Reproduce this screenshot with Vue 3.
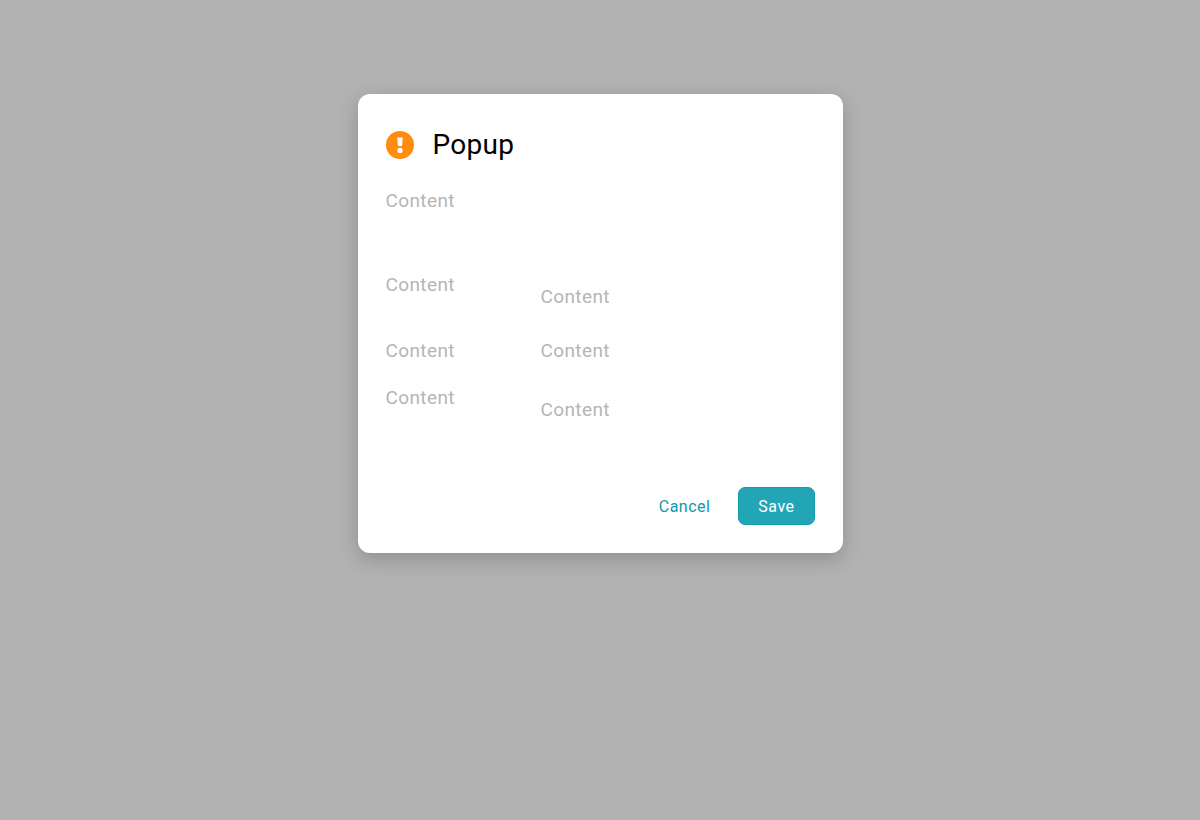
<script setup>
const rows = [
  { label: 'Content', value: 'Content', kind: 'offset' },
  { label: 'Content', value: 'Content', kind: 'level' },
  { label: 'Content', value: 'Content', kind: 'offset' },
]
</script>

<template>
  <main class="overlay">
    <section class="popup" role="dialog" aria-labelledby="popup-title">
      <header class="head">
        <svg class="icon" viewBox="0 0 28 28" aria-hidden="true">
          <circle cx="14" cy="14" r="14" fill="#ff8c0f" />
          <path d="M11.3 6.500h5.400l-.6 8.600h-4.200z" fill="#fff" />
          <circle cx="14" cy="19.400" r="2.600" fill="#fff" />
        </svg>
        <h1 id="popup-title" class="title">Popup</h1>
      </header>
      <p class="intro">Content</p>
      <dl class="rows">
        <div v-for="(row, i) in rows" :key="i" class="row" :class="row.kind">
          <dt>{{ row.label }}</dt>
          <dd>{{ row.value }}</dd>
        </div>
      </dl>
      <footer class="actions">
        <button type="button" class="btn">Cancel</button>
        <button type="button" class="btn primary">Save</button>
      </footer>
    </section>
  </main>
</template>

<style>
body {
  background: #b2b2b2;
}
</style>

<style scoped>
.overlay {
  box-sizing: border-box;
  min-height: 100vh;
  padding: 94px 24px;
  font-family: Roboto, sans-serif;
  background: #b2b2b2;
}
.popup {
  box-sizing: border-box;
  max-width: 485px;
  margin: 0 auto;
  padding: 32px 28px 28px;
  border-radius: 12px;
  background: #fff;
  box-shadow: 0 6px 20px rgba(0, 0, 0, 0.2);
}
.head {
  display: flex;
  align-items: center;
  gap: 19px;
}
.icon {
  width: 28px;
  height: 28px;
}
.title {
  margin: 0;
  font-size: 28px;
  line-height: 38px;
  font-weight: 400;
  letter-spacing: 0.01em;
  color: #000;
}
.intro,
dt,
dd {
  margin: 0;
  font-size: 19px;
  line-height: 24px;
  letter-spacing: 0.02em;
  color: #b5b5b5;
}
.intro {
  margin-top: 25px;
}
.rows {
  display: grid;
  gap: 23px;
  margin: 60px 0 65px;
}
.row {
  display: grid;
  grid-template-columns: 155px 1fr;
}
.offset dd {
  padding-top: 12px;
}
.rows .offset:first-child {
  padding-bottom: 7px;
}
.actions {
  display: flex;
  justify-content: flex-end;
  gap: 8px;
}
.btn {
  height: 38px;
  padding: 0 19px;
  border: 1px solid transparent;
  border-radius: 7px;
  background: none;
  font-family: inherit;
  font-size: 16px;
  letter-spacing: 0.03em;
  color: #0e9aa7;
}
.primary {
  border-color: #129dac;
  background: #22a5b5;
  color: #fff;
}
</style>
